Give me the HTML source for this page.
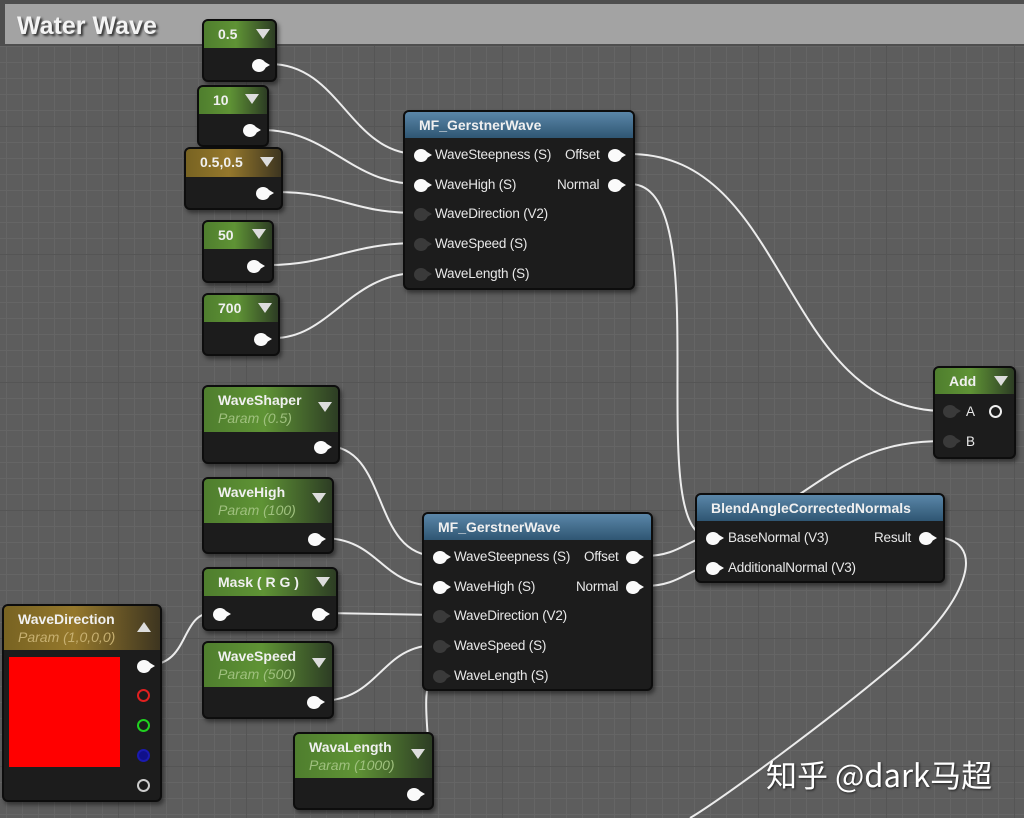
<!DOCTYPE html>
<html><head><meta charset="utf-8"><style>
*{margin:0;padding:0;box-sizing:border-box}
body{width:1024px;height:818px;overflow:hidden;position:relative;font-family:"Liberation Sans","Noto Sans CJK SC",sans-serif;
background-color:#5d5d5d;
background-image:linear-gradient(#555 1px,transparent 1px),linear-gradient(90deg,#555 1px,transparent 1px),linear-gradient(#656565 1px,transparent 1px),linear-gradient(90deg,#656565 1px,transparent 1px);
background-size:128px 128px,128px 128px,16px 16px,16px 16px;background-position:-10px -2px,-10px -2px,-10px -2px,-10px -2px}
.title{position:absolute;left:0;top:0;width:1024px;height:46px;background:#4e4e4e}
.title div{position:absolute;left:5px;top:4px;right:0;height:40px;background:#a3a3a3;color:#f4f4f4;font-weight:bold;font-size:25px;padding:8px 0 0 12px;text-shadow:2px 2px 2px #333}
.n{position:absolute;background:#1c1c1c;border:2px solid #0d0d0d;border-radius:6px;box-shadow:2px 3px 4px rgba(0,0,0,.45);color:#e6e6e6;font-size:13px}
.h{position:absolute;left:0;right:0;top:0;border-radius:4px 4px 0 0;font-weight:bold;color:#f0f0f0;padding:5px 0 0 14px;font-size:14px}
.g{background:linear-gradient(90deg,#4f7e2e,#5f9335 45%,#2d3d24)}
.y{background:linear-gradient(90deg,#786322,#95782c 45%,#3d3520)}
.b{background:linear-gradient(#5a86a8,#2f5673)}
.h i{display:block;font-style:italic;font-weight:normal;color:#9fc07e;font-size:14px;margin-top:2px}
.y i{color:#c7b071}
.tri{position:absolute;width:0;height:0;border-left:7px solid transparent;border-right:7px solid transparent;border-top:10px solid #ddd}
.p{position:absolute;width:14px;height:13px;border-radius:50%;background:#fafafa}
.p:after{content:"";position:absolute;right:-4px;top:3px;border-left:5px solid #fafafa;border-top:3.5px solid transparent;border-bottom:3.5px solid transparent}
.d{background:#3a3a3a}.d:after{border-left-color:#3a3a3a}
.r{position:absolute;white-space:nowrap;font-size:13.5px;color:#e8e8e8;letter-spacing:-0.2px}
.ring{position:absolute;width:13px;height:13px;border-radius:50%;border:2px solid}
</style></head><body>
<div class="title"><div>Water Wave</div></div>
<svg width="1024" height="818" style="position:absolute;left:0;top:0" fill="none" stroke="#ececec" stroke-width="2">
<path d="M270 64 C340 64,350 154,418 154"/>
<path d="M262 130 C330 130,350 184,418 184"/>
<path d="M276 192 C340 192,350 213,418 213"/>
<path d="M268 265 C330 265,350 243,418 243"/>
<path d="M274 338 C330 338,350 273,418 273"/>
<path d="M630 154 C790 154,780 411,945 411"/>
<path d="M630 184 C720 184,640 537,710 537"/>
<path d="M645 556 C680 556,690 537,710 537"/>
<path d="M645 586 C680 586,690 567,710 567"/>
<path d="M800 494 C850 460,880 441,945 441"/>
<path d="M932 537 C990 537,970 600,900 660 S720 800,690 818"/>
<path d="M326 446 C390 446,370 556,437 556"/>
<path d="M322 538 C380 538,380 586,437 586"/>
<path d="M325 613 L437 615"/>
<path d="M148 665 C190 665,180 613,212 613"/>
<path d="M320 701 C380 701,380 645,437 645"/>
<path d="M420 793 C445 793,410 680,437 675"/>
</svg>

<div class="n" style="left:202px;top:19px;width:75px;height:63px"><div class="h g" style="height:27px">0.5</div><div class="tri" style="left:52px;top:8px"></div><div class="p" style="left:48px;top:38px"></div></div>
<div class="n" style="left:197px;top:85px;width:72px;height:62px"><div class="h g" style="height:27px">10</div><div class="tri" style="left:46px;top:7px"></div><div class="p" style="left:44px;top:37px"></div></div>
<div class="n" style="left:184px;top:147px;width:99px;height:63px"><div class="h y" style="height:28px">0.5,0.5</div><div class="tri" style="left:74px;top:8px"></div><div class="p" style="left:70px;top:38px"></div></div>
<div class="n" style="left:202px;top:220px;width:72px;height:63px"><div class="h g" style="height:27px">50</div><div class="tri" style="left:48px;top:7px"></div><div class="p" style="left:43px;top:38px"></div></div>
<div class="n" style="left:202px;top:293px;width:78px;height:63px"><div class="h g" style="height:27px">700</div><div class="tri" style="left:54px;top:8px"></div><div class="p" style="left:50px;top:38px"></div></div>

<div class="n" style="left:403px;top:110px;width:232px;height:180px"><div class="h b" style="height:26px">MF_GerstnerWave</div>
<div class="p" style="left:9px;top:37px"></div><div class="r" style="left:30px;top:35px">WaveSteepness (S)</div><div class="r" style="left:160px;top:35px">Offset</div><div class="p" style="left:203px;top:37px"></div>
<div class="p" style="left:9px;top:67px"></div><div class="r" style="left:30px;top:65px">WaveHigh (S)</div><div class="r" style="left:152px;top:65px">Normal</div><div class="p" style="left:203px;top:67px"></div>
<div class="p d" style="left:9px;top:96px"></div><div class="r" style="left:30px;top:94px">WaveDirection (V2)</div>
<div class="p d" style="left:9px;top:126px"></div><div class="r" style="left:30px;top:124px">WaveSpeed (S)</div>
<div class="p d" style="left:9px;top:156px"></div><div class="r" style="left:30px;top:154px">WaveLength (S)</div></div>

<div class="n" style="left:202px;top:385px;width:138px;height:79px"><div class="h g" style="height:45px">WaveShaper<i>Param (0.5)</i></div><div class="tri" style="left:114px;top:15px"></div><div class="p" style="left:110px;top:54px"></div></div>
<div class="n" style="left:202px;top:477px;width:132px;height:77px"><div class="h g" style="height:44px">WaveHigh<i>Param (100)</i></div><div class="tri" style="left:108px;top:14px"></div><div class="p" style="left:104px;top:54px"></div></div>
<div class="n" style="left:202px;top:567px;width:136px;height:64px"><div class="h g" style="height:27px">Mask ( R G )</div><div class="tri" style="left:112px;top:8px"></div><div class="p" style="left:9px;top:39px"></div><div class="p" style="left:108px;top:39px"></div></div>
<div class="n" style="left:202px;top:641px;width:132px;height:78px"><div class="h g" style="height:44px">WaveSpeed<i>Param (500)</i></div><div class="tri" style="left:108px;top:15px"></div><div class="p" style="left:103px;top:53px"></div></div>
<div class="n" style="left:293px;top:732px;width:141px;height:78px"><div class="h g" style="height:44px">WavaLength<i>Param (1000)</i></div><div class="tri" style="left:116px;top:15px"></div><div class="p" style="left:112px;top:54px"></div></div>

<div class="n" style="left:2px;top:604px;width:160px;height:198px"><div class="h y" style="height:44px">WaveDirection<i>Param (1,0,0,0)</i></div>
<div style="position:absolute;left:133px;top:16px;border-left:7px solid transparent;border-right:7px solid transparent;border-bottom:10px solid #ddd"></div>
<div style="position:absolute;left:5px;top:51px;width:111px;height:110px;background:#ff0000"></div>
<div class="p" style="left:133px;top:54px"></div>
<div class="ring" style="left:133px;top:83px;border-color:#e02020"></div>
<div class="ring" style="left:133px;top:113px;border-color:#20d020"></div>
<div class="ring" style="left:133px;top:143px;border-color:#1a1ab0;background:#10108a"></div>
<div class="ring" style="left:133px;top:173px;border-color:#ccc"></div></div>

<div class="n" style="left:422px;top:512px;width:231px;height:179px"><div class="h b" style="height:26px">MF_GerstnerWave</div>
<div class="p" style="left:9px;top:37px"></div><div class="r" style="left:30px;top:35px">WaveSteepness (S)</div><div class="r" style="left:160px;top:35px">Offset</div><div class="p" style="left:202px;top:37px"></div>
<div class="p" style="left:9px;top:67px"></div><div class="r" style="left:30px;top:65px">WaveHigh (S)</div><div class="r" style="left:152px;top:65px">Normal</div><div class="p" style="left:202px;top:67px"></div>
<div class="p d" style="left:9px;top:96px"></div><div class="r" style="left:30px;top:94px">WaveDirection (V2)</div>
<div class="p d" style="left:9px;top:126px"></div><div class="r" style="left:30px;top:124px">WaveSpeed (S)</div>
<div class="p d" style="left:9px;top:156px"></div><div class="r" style="left:30px;top:154px">WaveLength (S)</div></div>

<div class="n" style="left:695px;top:493px;width:250px;height:90px"><div class="h b" style="height:26px">BlendAngleCorrectedNormals</div>
<div class="p" style="left:9px;top:37px"></div><div class="r" style="left:31px;top:35px">BaseNormal (V3)</div><div class="r" style="left:177px;top:35px">Result</div><div class="p" style="left:222px;top:37px"></div>
<div class="p" style="left:9px;top:67px"></div><div class="r" style="left:31px;top:65px">AdditionalNormal (V3)</div></div>

<div class="n" style="left:933px;top:366px;width:83px;height:93px"><div class="h g" style="height:26px">Add</div><div class="tri" style="left:59px;top:8px"></div>
<div class="p d" style="left:8px;top:37px"></div><div class="r" style="left:31px;top:36px">A</div><div class="ring" style="left:54px;top:37px;border-color:#eee"></div>
<div class="p d" style="left:8px;top:67px"></div><div class="r" style="left:31px;top:66px">B</div></div>

<div style="position:absolute;left:766px;top:751px;color:#fff;font-size:31px;text-shadow:1px 1px 2px #222;font-family:'Noto Sans CJK SC','Liberation Sans',sans-serif">知乎 @dark马超</div>
</body></html>
